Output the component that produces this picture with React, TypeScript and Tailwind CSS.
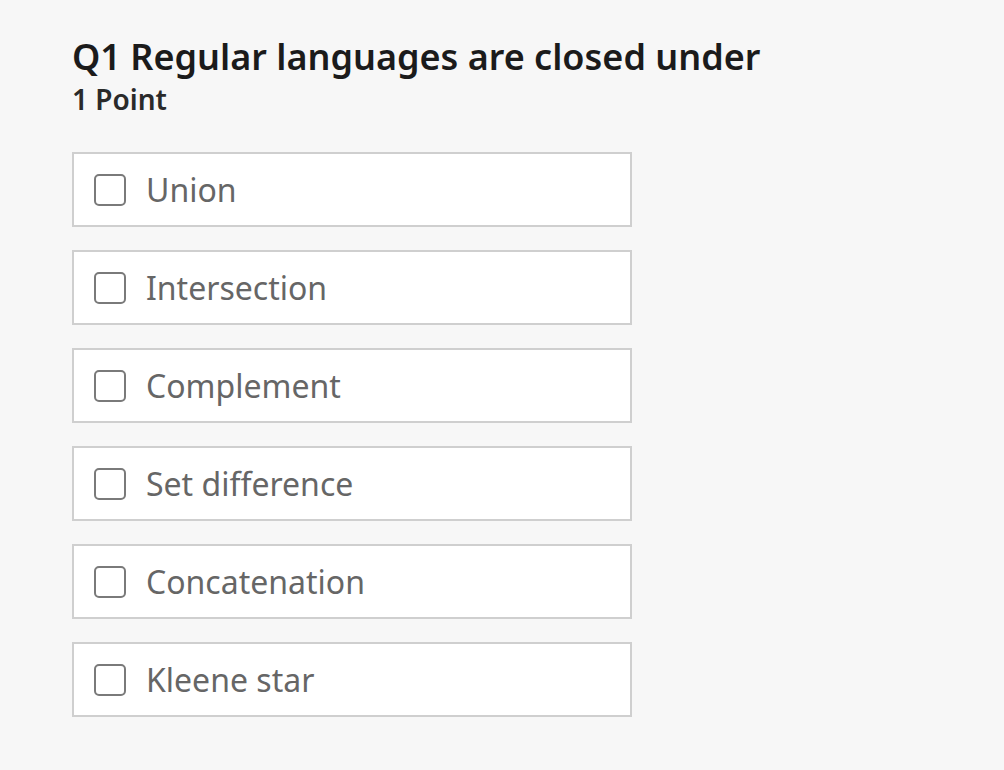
import React from "react";

const options = ["Union", "Intersection", "Complement", "Set difference", "Concatenation", "Kleene star"];

export default function App() {
  return (
    <div className="min-h-[770px] w-full bg-[#f7f7f7] px-[72px] pt-[32px]" style={{ fontFamily: '"Noto Sans", "Open Sans", sans-serif' }}>
      <h1 className="text-[36px] font-semibold leading-[49px] text-[#1b1b1b]">Q1 Regular languages are closed under</h1>
      <div className="text-[28px] font-semibold leading-[36px] text-[#2a2a2a]">1 Point</div>
      <div className="mt-[35px] flex w-[560px] flex-col gap-[23px]">
        {options.map((o) => (
          <label key={o} className="flex h-[75px] items-center gap-[20px] border-2 border-[#cfcfcf] bg-white pl-[20px]">
            <span className="h-[32px] w-[32px] rounded-[5px] border-2 border-[#7a7a7a] bg-white" />
            <span className="text-[32px] text-[#666666]">{o}</span>
          </label>
        ))}
      </div>
    </div>
  );
}
